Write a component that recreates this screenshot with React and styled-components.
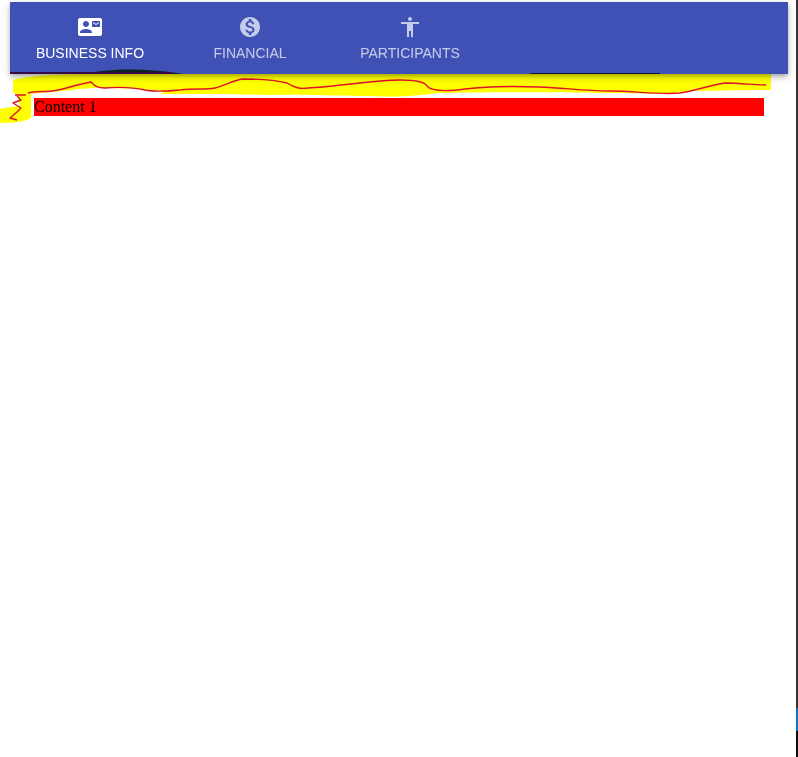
import React, { useState } from "react";
import styled, { createGlobalStyle } from "styled-components";
import { MdContactMail, MdMonetizationOn, MdAccessibility } from "react-icons/md";

const tabs = [
  { label: "Business Info", Icon: MdContactMail },
  { label: "Financial", Icon: MdMonetizationOn },
  { label: "Participants", Icon: MdAccessibility },
];

export default function App() {
  const [active, setActive] = useState(0);

  return (
    <>
      <GlobalStyle />
      <Screen>
        <Page>
          <TabBar>
            {tabs.map(({ label, Icon }, idx) => (
              <Tab key={label} $active={idx === active} onClick={() => setActive(idx)}>
                <Icon size={24} />
                <span>{label}</span>
              </Tab>
            ))}
          </TabBar>
          <Panel>Content {active + 1}</Panel>
          <Scribble width="798" height="130" viewBox="0 0 798 130">
            <path
              fill="#ffff00"
              d="M13 80 C30 75 60 74 90 74 L771 74 L771 90 C740 90 710 91 690 91 C670 95 640 93 600 93 C560 92 500 92 437 93 C410 97 390 97 370 96 C340 96 310 94 270 95 C240 94 200 94 160 94 C175 90 130 88 95 88 L80 89 C60 92 45 92 31 94 L31 118 C25 122 12 123 0 123 L0 109 C6 107 14 107 20 106 L17 94 L13 93 Z"
            />
            <path fill="#2f6a2f" d="M87 74 C105 68 150 68 183 74 Z" />
            <path fill="#3a4a4a" d="M530 73 H660 V74 H530 Z" />
            <path fill="none" stroke="#d81b60" strokeWidth="2" d="M10 73 H172" />
            <path
              fill="none"
              stroke="#e0102a"
              strokeWidth="1.4"
              strokeLinejoin="round"
              d="M28 93 C34 91 46 92 52 91 C62 90 78 84 91 82 C94 85 96 88 105 88 C118 87 132 87 145 90 C155 92 170 91 180 90 C195 88 205 90 215 88 C225 86 233 80 243 79 C258 79 275 80 287 83 C295 88 300 89 308 88 C335 87 375 80 400 80 C415 80 425 82 427 86 C432 92 450 91 465 89 C490 86 515 86 540 87 C565 88 585 91 610 91 C635 91 660 95 680 93 C695 91 710 85 725 83 C740 83 755 85 766 85"
            />
            <path
              fill="none"
              stroke="#e0102a"
              strokeWidth="1.4"
              strokeLinejoin="round"
              d="M15 95 H26 M17 96 L21 100 L13 103 L21 108 L17 112 L10 118 L17 120"
            />
          </Scribble>
        </Page>
        <ScreenEdge>
          <EdgeSegment $height="708px" $color="#333333" />
          <EdgeSegment $height="23px" $color="#0a78c8" />
          <EdgeSegment $height="26px" $color="#0c0c0c" />
        </ScreenEdge>
      </Screen>
    </>
  );
}

const GlobalStyle = createGlobalStyle`
  html, body {
    margin: 0;
    background: #fff;
    overflow: hidden;
  }
`;

const Screen = styled.div`
  display: flex;
  width: 798px;
  height: 757px;
`;

const Page = styled.div`
  position: relative;
  flex: 1;
  padding: 2px 8px 0 10px;
  font-family: "Liberation Serif", serif;
  font-size: 16px;
  color: #000;
`;

const TabBar = styled.div`
  display: flex;
  height: 72px;
  background-color: #3f51b5;
  box-shadow: 0 2px 4px -1px rgba(0, 0, 0, 0.2), 0 4px 5px 0 rgba(0, 0, 0, 0.14),
    0 1px 10px 0 rgba(0, 0, 0, 0.12);
`;

const Tab = styled.div`
  display: flex;
  flex-direction: column;
  align-items: center;
  justify-content: center;
  gap: 6px;
  width: 160px;
  height: 72px;
  color: ${(props) => (props.$active ? "#ffffff" : "rgba(255, 255, 255, 0.7)")};
  cursor: pointer;
  span {
    font-family: "Liberation Sans", Arial, sans-serif;
    font-size: 14px;
    line-height: 16px;
    text-transform: uppercase;
  }
`;

const Panel = styled.div`
  width: 730px;
  height: 18px;
  margin: 24px 0 0 24px;
  line-height: 18px;
  background-color: #ff0000;
`;

const Scribble = styled.svg`
  position: absolute;
  top: 0;
  left: 0;
  pointer-events: none;
  mix-blend-mode: multiply;
`;

const ScreenEdge = styled.div`
  display: flex;
  flex-direction: column;
  width: 2px;
`;

const EdgeSegment = styled.div`
  height: ${(props) => props.$height};
  background-color: ${(props) => props.$color};
`;
